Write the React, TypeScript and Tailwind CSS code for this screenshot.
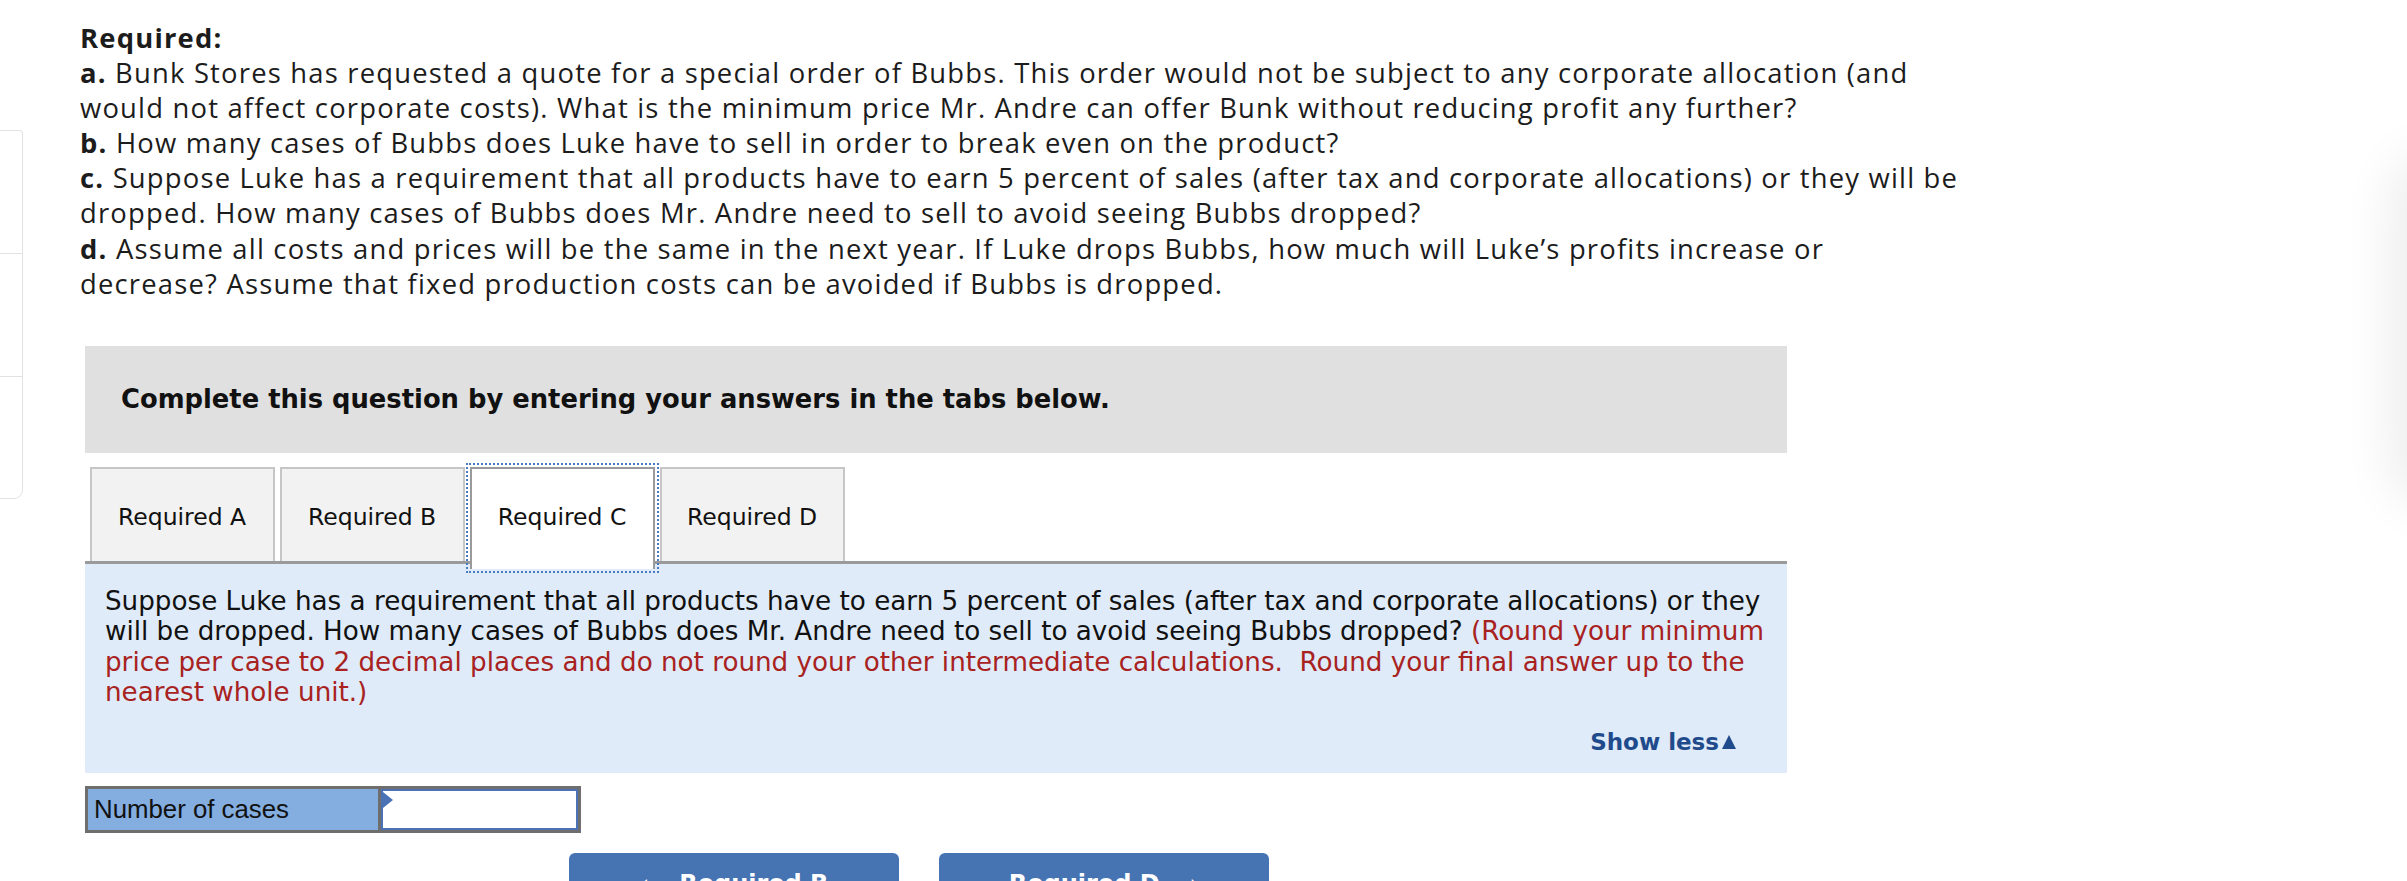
import React from "react";

const Q = "font-['Open_Sans','Liberation_Sans',sans-serif]";
const V = "font-['DejaVu_Sans','Verdana',sans-serif]";

function Line({ b, children }: { b?: string; children?: React.ReactNode }) {
  return (
    <div className="whitespace-nowrap">
      {b ? <span className="font-bold">{b}</span> : null}
      {children}
    </div>
  );
}

function Tab({ label, active }: { label: string; active?: boolean }) {
  if (active) {
    return (
      <div className="relative z-10 w-[185px] h-[102px] -mb-[8px] pb-[8px] pt-[6px] bg-white border-2 border-b-0 border-[#9a9a9a] outline-2 outline-dotted outline-[#4a7cc4] outline-offset-[2px] flex items-center justify-center">
        <span className={`${V} text-[23.5px] text-[#111]`}>{label}</span>
      </div>
    );
  }
  return (
    <div className="w-[185px] h-[94px] pt-[6px] bg-[#f2f2f2] border-2 border-b-0 border-[#c6c6c6] flex items-center justify-center">
      <span className={`${V} text-[23.5px] text-[#111]`}>{label}</span>
    </div>
  );
}

export default function App() {
  return (
    <div className="relative w-[2407px] h-[881px] overflow-hidden bg-white flex">
      {/* partial sidebar card at left edge */}
      <div className="w-[23px] shrink-0 pt-[130px]">
        <div className="h-[369px] border border-l-0 border-[#e2e2e2] rounded-tr-[4px] rounded-br-[9px] flex flex-col">
          <div className="h-[123px] border-b border-[#e2e2e2]" />
          <div className="h-[123px] border-b border-[#e2e2e2]" />
          <div className="flex-1" />
        </div>
      </div>

      <div className="ml-[57px] pt-[20px] flex flex-col">
        <div className={`${Q} text-[27.4px] leading-[35.1px] tracking-[1.2px] text-[#1c1c1c]`}>
          <Line b="Required:" />
          <Line b="a.">
            {" "}Bunk Stores has requested a quote for a special order of Bubbs. This order would not be subject to any corporate allocation (and
          </Line>
          <Line>
            would not affect corporate costs). What is the minimum price Mr. Andre can offer Bunk without reducing profit any further?
          </Line>
          <Line b="b.">
            {" "}How many cases of Bubbs does Luke have to sell in order to break even on the product?
          </Line>
          <Line b="c.">
            {" "}Suppose Luke has a requirement that all products have to earn 5 percent of sales (after tax and corporate allocations) or they will be
          </Line>
          <Line>
            dropped. How many cases of Bubbs does Mr. Andre need to sell to avoid seeing Bubbs dropped?
          </Line>
          <Line b="d.">
            {" "}Assume all costs and prices will be the same in the next year. If Luke drops Bubbs, how much will Luke’s profits increase or
          </Line>
          <Line>
            decrease? Assume that fixed production costs can be avoided if Bubbs is dropped.
          </Line>
        </div>

        <div className="ml-[5px] mt-[45px] w-[1702px] flex flex-col">
          {/* instruction bar */}
          <div className="h-[107px] bg-[#e0e0e0] pl-[36px] flex items-center">
            <span className={`${V} font-bold text-[25.8px] text-[#111]`}>
              Complete this question by entering your answers in the tabs below.
            </span>
          </div>

          {/* tabs */}
          <div className="mt-[14px] pl-[4.6px] flex items-end gap-[5px]">
            <Tab label="Required A" />
            <Tab label="Required B" />
            <Tab label="Required C" active />
            <Tab label="Required D" />
          </div>
          <div className="h-[3px] bg-[#9a9a9a]" />

          {/* question panel */}
          <div className="bg-[#dfebf8] pl-[20px] pr-[50px] pt-[22px] pb-[16px] flex flex-col">
            <div className={`${V} text-[26.2px] leading-[30.5px] text-[#111]`}>
              <div className="whitespace-nowrap">
                Suppose Luke has a requirement that all products have to earn 5 percent of sales (after tax and corporate allocations) or they
              </div>
              <div className="whitespace-nowrap">
                will be dropped. How many cases of Bubbs does Mr. Andre need to sell to avoid seeing Bubbs dropped?{" "}
                <span className="text-[#a8221f]">(Round your minimum</span>
              </div>
              <div className="whitespace-nowrap text-[#a8221f]">
                price per case to 2 decimal places and do not round your other intermediate calculations.&nbsp; Round your final answer up to the
              </div>
              <div className="whitespace-nowrap text-[#a8221f]">nearest whole unit.)</div>
            </div>
            <div className="mt-[19px] flex justify-end">
              <span className={`${V} font-bold text-[23px] leading-[30px] text-[#1f4a8c] flex items-center`}>
                Show less
                <svg width="16" height="16" viewBox="0 0 16 16" className="ml-[2px]">
                  <polygon points="8,1 15,15 1,15" fill="#1f4a8c" />
                </svg>
              </span>
            </div>
          </div>

          {/* answer row */}
          <div className="mt-[13px] flex">
            <div className="flex h-[47px] border-[3px] border-[#6e6e6e] bg-[#6e6e6e] gap-[3px]">
              <div className="w-[290px] bg-[#84ade0] pl-[6px] flex items-center">
                <span className="font-['Liberation_Sans',Arial,sans-serif] text-[25.8px] text-[#111]">Number of cases</span>
              </div>
              <div className="relative w-[197px] bg-white border-2 border-[#4a72b4]">
                <svg width="10" height="16" viewBox="0 0 10 16" className="absolute left-0 top-[1px]">
                  <polygon points="0,0 10,8 0,16" fill="#4a72b4" />
                </svg>
              </div>
            </div>
          </div>

          {/* navigation buttons */}
          <div className="mt-[20px] ml-[484px] flex gap-[40px]">
            <div className="w-[330px] h-[60px] rounded-t-[6px] bg-[#4674b3] flex items-start justify-center pt-[17px]">
              <span className={`${V} font-bold text-[24px] leading-[29px] text-white flex items-center gap-[30px]`}>
                <span className="font-normal">‹</span>
                Required B
              </span>
            </div>
            <div className="w-[330px] h-[60px] rounded-t-[6px] bg-[#4674b3] flex items-start justify-center pt-[17px]">
              <span className={`${V} font-bold text-[24px] leading-[29px] text-white flex items-center gap-[30px]`}>
                Required D
                <span className="font-normal">›</span>
              </span>
            </div>
          </div>
        </div>
      </div>

      {/* soft shadow of an off-screen panel at the right edge */}
      <div className="absolute right-[-70px] top-[170px] w-[70px] h-[320px] rounded-[30px] shadow-[0_0_50px_18px_rgba(0,0,0,0.07)]" />
    </div>
  );
}
